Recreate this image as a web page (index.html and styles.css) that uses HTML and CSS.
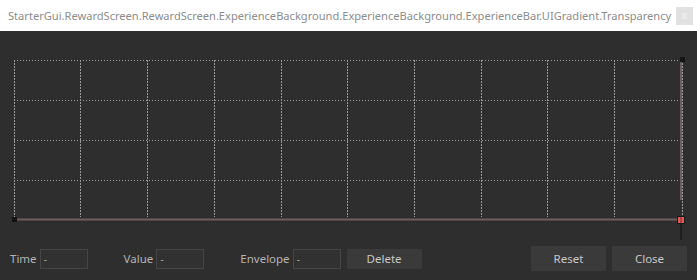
FILE: index.html
```html
<!DOCTYPE html>
<html lang="en">
<head>
    <meta charset="UTF-8">
    <title>UIGradient Transparency</title>
    <link rel="stylesheet" href="styles.css">
</head>
<body>

<div class="title-bar">
    <span class="title">StarterGui.RewardScreen.RewardScreen.ExperienceBackground.ExperienceBackground.ExperienceBar.UIGradient.Transparency</span>
    <span class="close-x">x</span>
</div>

<!-- Grafico envelope -->
<div class="graph">
    <svg width="697" height="215" viewBox="0 0 697 215">
        <g class="grid-h">
            <line x1="14" y1="29.5" x2="681" y2="29.5"/>
            <line x1="14" y1="69.5" x2="681" y2="69.5"/>
            <line x1="14" y1="109.5" x2="681" y2="109.5"/>
            <line x1="14" y1="149.5" x2="681" y2="149.5"/>
        </g>
        <g class="grid-v">
            <line x1="14.5" y1="29" x2="14.5" y2="186"/>
            <line x1="80.5" y1="29" x2="80.5" y2="186"/>
            <line x1="147.5" y1="29" x2="147.5" y2="186"/>
            <line x1="214.5" y1="29" x2="214.5" y2="186"/>
            <line x1="281.5" y1="29" x2="281.5" y2="186"/>
            <line x1="347.5" y1="29" x2="347.5" y2="186"/>
            <line x1="414.5" y1="29" x2="414.5" y2="186"/>
            <line x1="481.5" y1="29" x2="481.5" y2="186"/>
            <line x1="547.5" y1="29" x2="547.5" y2="186"/>
            <line x1="614.5" y1="29" x2="614.5" y2="186"/>
            <line x1="682.5" y1="29" x2="682.5" y2="186"/>
        </g>
        <!-- curva -->
        <line class="curve" x1="14" y1="188.5" x2="681" y2="188.5"/>
        <line class="curve" x1="681" y1="30" x2="681" y2="169"/>
        <line class="stem" x1="681" y1="192" x2="681" y2="209"/>
        <!-- punti -->
        <rect class="point" x="12" y="186" width="5" height="5"/>
        <rect class="point" x="680" y="26" width="5" height="5"/>
        <rect class="point-sel" x="677.5" y="185.5" width="7" height="7"/>
        <line class="point-sel-mid" x1="681" y1="186" x2="681" y2="192"/>
    </svg>
</div>

<!-- Controlli -->
<div class="controls">
    <label class="field">Time <input type="text" value="-"></label>
    <label class="field">Value <input type="text" value="-"></label>
    <label class="field">Envelope <input type="text" value="-"></label>
    <button class="btn btn-small">Delete</button>
    <div class="spacer"></div>
    <button class="btn">Reset</button>
    <button class="btn">Close</button>
</div>

</body>
</html>
```

FILE: styles.css
```css
body {
    margin: 0;
    padding: 0;
    width: 697px;
    height: 280px;
    overflow: hidden;
    background-color: #2e2e2e;
    font-family: "Noto Sans", "Open Sans", sans-serif;
    font-size: 11.5px;
    color: #b4b4b4;
}

.title-bar {
    height: 31px;
    background: white;
    display: flex;
    align-items: center;
    padding-left: 8px;
}

.title {
    flex: 1;
    color: #8c8c8c;
    font-size: 11.1px;
    white-space: nowrap;
}

.close-x {
    width: 17px;
    height: 18px;
    margin-right: 4px;
    background: #e1e1e1;
    color: #f4f4f4;
    font-size: 10px;
    line-height: 17px;
    text-align: center;
}

.graph svg {
    display: block;
}

.grid-h line {
    stroke: #9a9a9a;
    stroke-width: 1;
    stroke-dasharray: 1 2;
}

.grid-v line {
    stroke: #9a9a9a;
    stroke-width: 1;
    stroke-dasharray: 2 1;
}

.curve {
    stroke: #6e5e5e;
    stroke-width: 2;
}

.stem {
    stroke: #1e1e1e;
    stroke-width: 2;
}

.point {
    fill: #141414;
}

.point-sel {
    fill: #e05a5a;
    stroke: #1a1a1a;
    stroke-width: 1;
}

.point-sel-mid {
    stroke: #7a2a2a;
    stroke-width: 1;
}

.controls {
    display: flex;
    align-items: center;
    height: 25px;
    padding: 0 10px 0 10px;
}

.field {
    display: flex;
    align-items: center;
    gap: 3px;
    margin-right: 36px;
}

.field:last-of-type {
    margin-right: 6px;
}

.field input {
    padding: 0 0 0 3px;
    box-sizing: border-box;
    width: 48px;
    height: 20px;
    background: #313131;
    border: 1px solid #464646;
    color: #a0a0a0;
    font-family: inherit;
    font-size: 11px;
}

.btn {
    width: 75px;
    height: 25px;
    background: #3a3a3a;
    border: none;
    color: #c8c8c8;
    font-family: inherit;
    font-size: 11.5px;
    margin-left: 6px;
}

.btn-small {
    height: 20px;
    margin-left: 0;
}

.spacer {
    flex: 1;
}
```
